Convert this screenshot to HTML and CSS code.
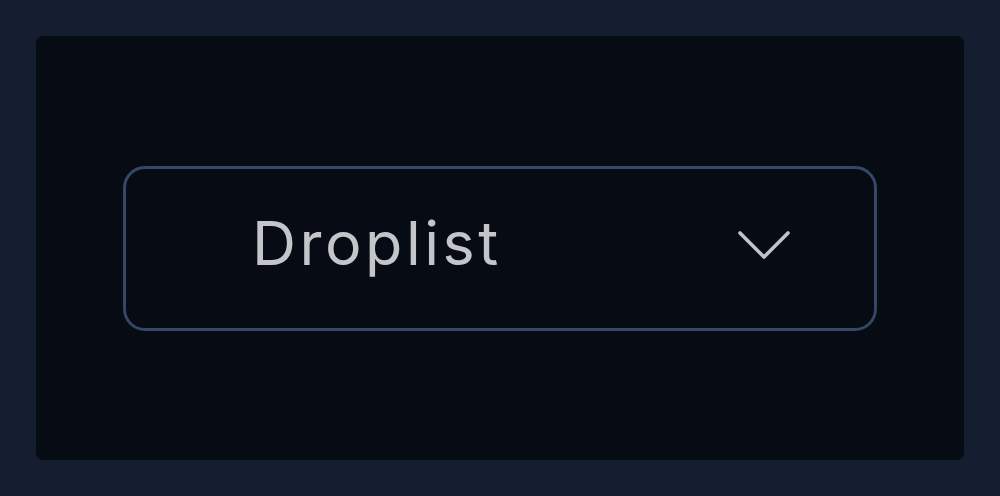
FILE: index.html
```html
<!DOCTYPE html>
<html>
	<head>
		<meta charset="utf-8">
		<title>Droplist</title>
		<link rel="stylesheet" href="styles.css">
	</head>
	<body>
		<div class="panel">
			<div class="droplist">
				<span class="label">Droplist</span>
				<svg class="arrow" width="52" height="30" viewBox="0 0 52 30">
					<polyline points="2,3 26,27 50,3" fill="none" stroke="#c2c3c7" stroke-width="3.6" stroke-linecap="round" stroke-linejoin="round"/>
				</svg>
			</div>
		</div>
	</body>
</html>
```

FILE: styles.css
```css
*{
	padding: 0;
	margin: 0;
	box-sizing: border-box;
}
html,body{
	width: 100%;
	height: 100%;
}
body{
	background-color: #151d30;
	padding: 36px;
	font-family: Inter, "Open Sans", sans-serif;
}
.panel{
	width: 928px;
	height: 424px;
	background-color: #070b13;
	border-radius: 7px;
	display: flex;
	align-items: center;
	justify-content: center;
}
.droplist{
	width: 754px;
	height: 165px;
	border: 3px solid #344766;
	border-radius: 22px;
	display: flex;
	align-items: center;
	justify-content: space-between;
	padding: 0 84px 0 126px;
}
.label{
	color: #c4c5c9;
	font-size: 61px;
	font-weight: 400;
	letter-spacing: 3.5px;
	line-height: 1;
	margin-top: -10px;
}
.arrow{
	display: block;
	margin-top: -6px;
}
```
